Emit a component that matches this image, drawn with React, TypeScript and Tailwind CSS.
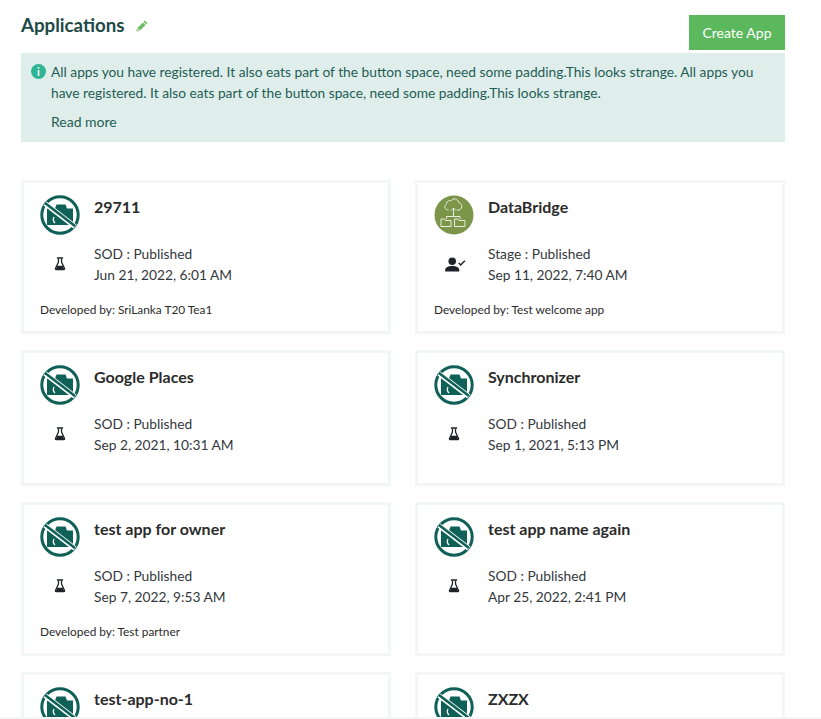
type AppItem = {
  name: string
  status?: string
  date?: string
  developer?: string
  bridge?: boolean
}

const apps: AppItem[] = [
  { name: '29711', status: 'SOD : Published', date: 'Jun 21, 2022, 6:01 AM', developer: 'SriLanka T20 Tea1' },
  { name: 'DataBridge', status: 'Stage : Published', date: 'Sep 11, 2022, 7:40 AM', developer: 'Test welcome app', bridge: true },
  { name: 'Google Places', status: 'SOD : Published', date: 'Sep 2, 2021, 10:31 AM' },
  { name: 'Synchronizer', status: 'SOD : Published', date: 'Sep 1, 2021, 5:13 PM' },
  { name: 'test app for owner', status: 'SOD : Published', date: 'Sep 7, 2022, 9:53 AM', developer: 'Test partner' },
  { name: 'test app name again', status: 'SOD : Published', date: 'Apr 25, 2022, 2:41 PM' },
  { name: 'test-app-no-1' },
  { name: 'ZXZX' },
]

function NoCameraIcon() {
  return (
    <svg viewBox="0 0 40 40" className="w-10 h-10 shrink-0">
      <path d="M7 13.500h8l1.500-4h9l1.500 4h6v16.500h-26z" fill="#0f6157" />
      <path d="M15 28a5 5 0 0 1 -1-6" fill="none" stroke="#fff" strokeWidth="1.300" />
      <circle cx="20" cy="20" r="18.200" fill="none" stroke="#0f6157" strokeWidth="3" />
      <path d="M5 8.500l30 23" stroke="#fff" strokeWidth="5" />
      <path d="M5 8l30 23" stroke="#0f6157" strokeWidth="2.600" />
    </svg>
  )
}

function BridgeIcon() {
  return (
    <svg viewBox="0 0 40 40" className="w-10 h-10 shrink-0">
      <circle cx="20" cy="20" r="19.500" fill="#7b9648" />
      <g fill="none" stroke="#e8eedd" strokeWidth="1">
        <path d="M14.500 15c-3.500 0-5-4-2-6c0-3 3-4 4.500-3c2-3.500 7-2.500 7.500 1.500c3.500 0 5 6 .5 7.500h-2" />
        <path d="M19.500 22v-9M17 15.500l2.500-2.500l2.500 2.500" />
        <path d="M12.500 24v-2.500h13.500v2.500" />
        <path d="M7 24h3.500l1 1.500h5.500v6h-10zM20.500 24h3.500l1 1.500h6v6h-10.500z" />
      </g>
    </svg>
  )
}

function FlaskIcon() {
  return (
    <svg viewBox="0 0 14 16" className="w-[12px] h-[14px]">
      <path d="M4 1h6" stroke="#1f2329" strokeWidth="1.600" strokeLinecap="round" />
      <path d="M5.200 1.500v4.300L1.700 13.200c-.3.700.1 1.300.8 1.300h9c.7 0 1.100-.6.800-1.300L8.800 5.800V1.500" fill="none" stroke="#1f2329" strokeWidth="1.500" />
      <path d="M3.800 10h6.400l1.600 3.800H2.200z" fill="#1f2329" />
    </svg>
  )
}

function UserCheckIcon() {
  return (
    <svg viewBox="0 0 22 16" className="w-[21px] h-[15px] ml-[3px]">
      <circle cx="7.500" cy="4.500" r="4" fill="#1f2329" />
      <path d="M0 15.500v-2c0-2.500 3.500-4 7.500-4s7.500 1.500 7.500 4v2z" fill="#1f2329" />
      <path d="M14.500 6.500l2 2l4.500-4.500" fill="none" stroke="#1f2329" strokeWidth="1.600" />
    </svg>
  )
}

function PencilIcon() {
  return (
    <svg viewBox="0 0 12 12" className="w-3 h-3 mt-[5px]">
      <path d="M8.800.6l2.600 2.600-1.200 1.200-2.600-2.600z" fill="#6dbb5f" />
      <path d="M7 2.400l2.600 2.600-5.600 5.600-2.600-2.600z" fill="#6dbb5f" />
      <path d="M1 8.600l2.400 2.400-3 .6z" fill="#8fb87a" />
    </svg>
  )
}

function AppCard({ app, height }: { app: AppItem; height: string }) {
  return (
    <div className={`${height} border-[3px] border-[#f3f6f6] bg-white pl-4 pt-3 text-[#2b2b2b]`}>
      <div className="flex gap-[14px]">
        {app.bridge ? <BridgeIcon /> : <NoCameraIcon />}
        <div className="text-base font-bold leading-6">{app.name}</div>
      </div>
      {app.status && (
        <div className="flex gap-[14px] mt-2">
          <div className="w-10 flex items-center justify-center shrink-0">
            {app.bridge ? <UserCheckIcon /> : <FlaskIcon />}
          </div>
          <div className="text-[13.75px] leading-[21px] text-[#33383c]">
            <div>{app.status}</div>
            <div>{app.date}</div>
          </div>
        </div>
      )}
      {app.developer && (
        <div className="text-[11.85px] leading-4 mt-[17px]">Developed by: {app.developer}</div>
      )}
    </div>
  )
}

export default function App() {
  const heights = ['h-[154px]', 'h-[154px]', 'h-[136px]', 'h-[136px]', 'h-[154px]', 'h-[154px]', 'h-[154px]', 'h-[154px]']
  return (
    <div className="h-[719px] overflow-hidden bg-white font-['Lato',sans-serif] relative">
      <div className="w-[764px] ml-[21px] pt-[15px]">
        {/* Title row */}
        <div className="flex justify-between h-[35px]">
          <div className="flex items-start gap-3">
            <h1 className="text-[18.7px] font-bold leading-[21px] text-[#1d4a45]">Applications</h1>
            <PencilIcon />
          </div>
          <button className="w-[96px] h-[35px] bg-[#5cb85c] text-white text-sm">Create App</button>
        </div>

        {/* Info banner */}
        <div className="mt-[3px] h-[89px] bg-[#e0eeeb] pl-[10px] pr-4 pt-2 text-[13.75px] text-[#1e5d55] flex gap-[5px]">
          <div className="w-[15px] h-[15px] mt-[3px] rounded-full bg-[#2fb594] text-white text-[11px] font-bold leading-[15px] text-center shrink-0">i</div>
          <div className="leading-[21px]">
            <p>All apps you have registered. It also eats part of the button space, need some padding.This looks strange. All apps you have registered. It also eats part of the button space, need some padding.This looks strange.</p>
            <p className="mt-[9px] text-sm">Read more</p>
          </div>
        </div>

        {/* App cards */}
        <div className="grid grid-cols-[370px_370px] gap-x-6 gap-y-4 mt-[38px]">
          {apps.map((app, i) => (
            <AppCard key={app.name} app={app} height={heights[i]} />
          ))}
        </div>
      </div>
      <div className="absolute bottom-0 left-0 right-0 h-[2px] bg-[#f3f6f6]" />
    </div>
  )
}
